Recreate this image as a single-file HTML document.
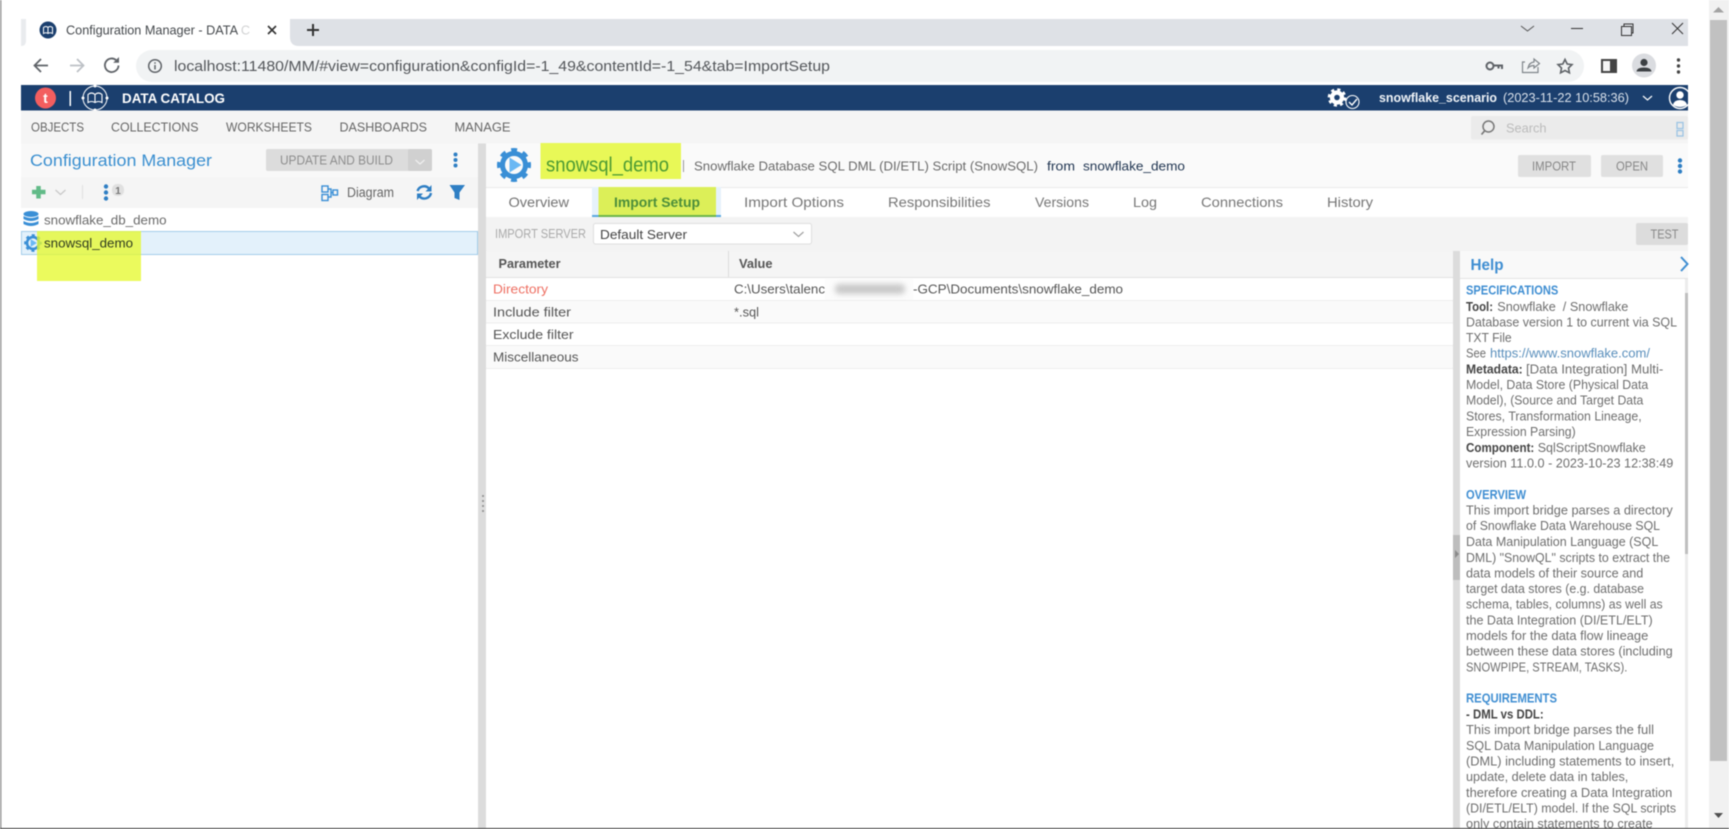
<!DOCTYPE html>
<html><head><meta charset="utf-8"><title>Configuration Manager - DATA CATALOG</title>
<style>
html,body{margin:0;padding:0;width:1729px;height:829px;overflow:hidden;background:#fff}
svg{display:block}
#root{filter:blur(.5px)}
text{font-family:"Liberation Sans",sans-serif;white-space:pre}
.h text{font-size:12.6px;fill:#6e6e6e}
.h .b{font-weight:bold;fill:#454545}
.h .c{font-weight:bold;fill:#3f8ed2}
.n{font-size:12.5px;fill:#666}
.m{font-size:13px;fill:#6a6a6a}
.r{font-size:13px;fill:#555}
.g{font-size:12.5px;fill:#9a9a9a}
</style></head><body>
<svg id="root" width="1729" height="829" viewBox="0 0 1729 829" xmlns="http://www.w3.org/2000/svg">
<defs>
<g id="gear"><circle r="11.5" fill="none" stroke="#3a8fd6" stroke-width="5"/><circle r="14.6" fill="none" stroke="#3a8fd6" stroke-width="4.8" stroke-dasharray="5.7 5.77" stroke-dashoffset="2.85"/><path d="M-4.5-7.5 7.5 0-4.5 7.5Z" fill="#6ab8f4"/></g>
<filter id="bl" x="-30%" y="-100%" width="160%" height="300%"><feGaussianBlur stdDeviation="3"/></filter>
</defs>
<rect width="1729" height="829" fill="#fff"/>
<rect x="0" y="0" width="1.5" height="829" fill="#9a9a9a"/>
<rect x="1709" y="0" width="20" height="829" fill="#f1f1f1"/>
<rect x="1710" y="20" width="17" height="741" fill="#c1c1c1"/>
<path d="M1713 12.5 1718.500 7 1724 12.500Z" fill="#a3a3a3"/>
<path d="M1714 813 1718.500 818 1723 813Z" fill="#505050"/>
<rect x="0" y="828" width="1729" height="1" fill="#333"/>

<!-- chrome tab strip -->
<rect x="21" y="19" width="1667" height="27" fill="#dee1e6"/>
<rect x="21" y="19" width="5" height="27" fill="#e9ebee"/>
<path d="M26 19H290V46H21Q26 46 26 41Z" fill="#fff"/>
<path d="M290 37Q290 46 299 46H290Z" fill="#fff"/>
<circle cx="48" cy="30" r="8.5" fill="#1b3f6e"/>
<path d="M43.500 33.500V27.500Q46 25.500 48 27.500Q50 25.500 52.500 27.500V33.500Q50 32 48 33.500Q46 32 43.500 33.500ZM48 27.500V33.500" fill="none" stroke="#fff" stroke-width="1"/>
<text x="66" y="34.500" font-size="13" fill="#45494d" textLength="184" lengthAdjust="spacingAndGlyphs">Configuration Manager - DATA C</text>
<rect x="240" y="22" width="17" height="18" fill="#fff" opacity=".75"/>
<path d="M268 26 276 34M276 26 268 34" stroke="#333" stroke-width="1.600"/>
<path d="M313 24V36M307 30H319" stroke="#333" stroke-width="2"/>
<path d="M1521 26 1527.500 31 1534 26" fill="none" stroke="#555" stroke-width="1"/>
<rect x="1571" y="28" width="12" height="1" fill="#333"/>
<rect x="1621.500" y="26.500" width="10" height="9" fill="#dee1e6" stroke="#333" stroke-width="1"/>
<path d="M1624 26V24H1633V33H1632" fill="none" stroke="#333" stroke-width="1"/>
<path d="M1672 23 1683 34M1683 23 1672 34" stroke="#333" stroke-width="1"/>

<!-- chrome toolbar -->
<path d="M48 65.500H35M41 59 34.500 65.500 41 72" fill="none" stroke="#5f6368" stroke-width="1.800"/>
<path d="M70 65.500H83M77 59 83.500 65.500 77 72" fill="none" stroke="#bdc1c6" stroke-width="1.800"/>
<path d="M118.500 65.500A6.800 6.800 0 1 1 116 60" fill="none" stroke="#5f6368" stroke-width="1.800"/>
<path d="M119 57V62.800H113.200Z" fill="#5f6368"/>
<rect x="136" y="50" width="1448" height="32" rx="16" fill="#f1f3f4"/>
<circle cx="155" cy="66" r="6.300" fill="none" stroke="#5f6368" stroke-width="1.500"/><path d="M155 65V69.500M155 62.200V63.700" stroke="#5f6368" stroke-width="1.500"/>
<text x="174" y="71" font-size="14.500" fill="#54575b" textLength="656" lengthAdjust="spacingAndGlyphs">localhost:11480/MM/#view=configuration&amp;configId=-1_49&amp;contentId=-1_54&amp;tab=ImportSetup</text>
<circle cx="1490" cy="66" r="3.500" fill="none" stroke="#5f6368" stroke-width="2"/><path d="M1493 65.500H1502V69M1498.500 66V68.500" fill="none" stroke="#5f6368" stroke-width="2"/>
<path d="M1525 62H1522.500V72.500H1538V67M1528 68Q1529 62.500 1534 62V59L1539.500 63.500 1534 68V65.500Q1530.500 65.500 1528 68Z" fill="none" stroke="#80868b" stroke-width="1.200"/>
<path d="M1565 59.500 1567.200 64 1572 64.600 1568.500 68 1569.400 72.800 1565 70.500 1560.600 72.800 1561.500 68 1558 64.600 1562.800 64Z" fill="none" stroke="#5f6368" stroke-width="1.600"/>
<rect x="1602" y="60" width="14" height="12" fill="#f5f5f5" stroke="#444" stroke-width="2"/><rect x="1610" y="60" width="6" height="12" fill="#444"/>
<circle cx="1644" cy="65.500" r="12" fill="#dadce0"/><circle cx="1644" cy="62.500" r="3.600" fill="#3c4043"/><path d="M1636.500 71.500Q1637 67.500 1644 67.500 1651 67.500 1651.500 71.500Z" fill="#3c4043"/>
<circle cx="1678.500" cy="60" r="1.700" fill="#444"/><circle cx="1678.500" cy="66" r="1.700" fill="#444"/><circle cx="1678.500" cy="72" r="1.700" fill="#444"/>

<!-- app header -->
<rect x="21" y="85" width="1667" height="25.500" fill="#1b3f6e"/>
<circle cx="45.500" cy="98" r="10.500" fill="#f35e5f"/>
<text x="45.500" y="103" font-size="14" font-weight="bold" fill="#fff" text-anchor="middle" font-family="Liberation Serif">t</text>
<rect x="69.500" y="91" width="1.500" height="15" fill="#fff"/>
<circle cx="95" cy="98" r="12" fill="none" stroke="#fff" stroke-width="1"/>
<circle cx="95" cy="86" r="1.500" fill="#fff"/><circle cx="95" cy="110" r="1.500" fill="#fff"/><circle cx="83" cy="98" r="1.500" fill="#fff"/><circle cx="107" cy="98" r="1.500" fill="#fff"/>
<path d="M88 102.500V94.500Q91.500 91.500 95 94.500Q98.500 91.500 102 94.500V102.500Q98.500 100.500 95 102.500Q91.500 100.500 88 102.500ZM95 94.500V102.500" fill="none" stroke="#fff" stroke-width="1.100"/>
<text x="122" y="103" font-size="14" font-weight="bold" fill="#fff" textLength="103" lengthAdjust="spacingAndGlyphs">DATA CATALOG</text>
<g transform="translate(1337,97.500) scale(.62)"><circle r="8" fill="none" stroke="#fff" stroke-width="7"/><circle r="12.500" fill="none" stroke="#fff" stroke-width="5" stroke-dasharray="4.900 4.920"/></g>
<circle cx="1352.500" cy="102" r="6.500" fill="#1b3f6e" stroke="#fff" stroke-width="1.100"/>
<path d="M1349 102 1352 105 1357 99" fill="none" stroke="#fff" stroke-width="1.400"/>
<text x="1379" y="102" font-size="12.500" font-weight="bold" fill="#f0f4f8" textLength="118" lengthAdjust="spacingAndGlyphs">snowflake_scenario</text>
<text x="1503" y="102" font-size="12.500" fill="#d8e0ea" textLength="126" lengthAdjust="spacingAndGlyphs">(2023-11-22 10:58:36)</text>
<path d="M1643 96 1647.500 100 1652 96" fill="none" stroke="#fff" stroke-width="1.200"/>
<circle cx="1680" cy="98" r="10.500" fill="#1b3f6e" stroke="#fff" stroke-width="1.400"/>
<circle cx="1680" cy="95" r="3.700" fill="#fff"/><path d="M1673 105Q1674 100 1680 100 1686 100 1687 105Q1680 109 1673 105Z" fill="#fff"/>
<rect x="1688" y="85" width="21" height="26" fill="#fff"/>

<!-- nav -->
<rect x="21" y="110.500" width="1667" height="33" fill="#f5f5f5"/>
<text class="n" x="31" y="131.500" textLength="53" lengthAdjust="spacingAndGlyphs">OBJECTS</text>
<text class="n" x="111" y="131.500" textLength="87.500" lengthAdjust="spacingAndGlyphs">COLLECTIONS</text>
<text class="n" x="226" y="131.500" textLength="86" lengthAdjust="spacingAndGlyphs">WORKSHEETS</text>
<text class="n" x="339.500" y="131.500" textLength="87.500" lengthAdjust="spacingAndGlyphs">DASHBOARDS</text>
<text class="n" x="454.500" y="131.500" textLength="56" lengthAdjust="spacingAndGlyphs">MANAGE</text>
<rect x="1471" y="116" width="217" height="23.500" rx="2" fill="#ebebeb"/>
<circle cx="1488.500" cy="126.500" r="5.500" fill="none" stroke="#777" stroke-width="1.500"/><path d="M1484.500 131 1481.500 134.500" stroke="#777" stroke-width="1.700"/>
<text x="1506" y="132.500" font-size="13" fill="#bbb" textLength="40.500" lengthAdjust="spacingAndGlyphs">Search</text>
<rect x="1677" y="122.500" width="6" height="6" fill="none" stroke="#9cc4e4" stroke-width="1.300"/><rect x="1677" y="130.500" width="6" height="5.500" fill="none" stroke="#9cc4e4" stroke-width="1.300"/>

<!-- left panel -->
<rect x="21" y="143.500" width="457" height="34" fill="#f8f8f8"/>
<rect x="21" y="177" width="457" height="31" fill="#f5f5f5"/>
<rect x="478" y="143.500" width="8" height="684.500" fill="#dcdcdc"/>
<circle cx="483" cy="496" r="1" fill="#888"/><circle cx="483" cy="501" r="1" fill="#888"/><circle cx="483" cy="506" r="1" fill="#888"/><circle cx="483" cy="511" r="1" fill="#888"/>
<text x="30" y="166" font-size="17" fill="#3a8fd0" textLength="182" lengthAdjust="spacingAndGlyphs">Configuration Manager</text>
<rect x="266" y="149" width="166" height="22" rx="2" fill="#dcdcdc"/>
<rect x="408" y="149" width="24" height="22" rx="2" fill="#d0d0d0"/>
<text x="280" y="164.500" font-size="12.500" fill="#8d8d8d" textLength="113" lengthAdjust="spacingAndGlyphs">UPDATE AND BUILD</text>
<path d="M415.500 160 420 164 424.500 160" fill="none" stroke="#efefef" stroke-width="1.300"/>
<circle cx="455.500" cy="154.500" r="2" fill="#2f7fc4"/><circle cx="455.500" cy="160" r="2" fill="#2f7fc4"/><circle cx="455.500" cy="165.500" r="2" fill="#2f7fc4"/>
<path d="M38.500 186V198.500M32 192H45.500" stroke="#62bb88" stroke-width="4.500"/>
<path d="M55.500 190 60.500 194.500 65.500 190" fill="none" stroke="#c9c9c9" stroke-width="1.300"/>
<rect x="82" y="185" width="1" height="14" fill="#e0e0e0"/>
<circle cx="106" cy="186.500" r="2.200" fill="#2f7fc4"/><circle cx="106" cy="192.500" r="2.200" fill="#2f7fc4"/><circle cx="106" cy="198.500" r="2.200" fill="#2f7fc4"/>
<rect x="112" y="184" width="12" height="12" rx="5" fill="#e0e0e0"/>
<text x="118" y="194" font-size="10" font-weight="bold" fill="#777" text-anchor="middle">1</text>
<g fill="none" stroke="#3a8fd6" stroke-width="1.400"><rect x="322" y="186" width="6" height="6"/><rect x="322" y="194.500" width="6" height="6"/><rect x="333" y="190" width="4.500" height="5"/><path d="M328 189H331V197H328M331 192.500H333"/></g>
<text x="347" y="197" font-size="13.500" fill="#666" textLength="47" lengthAdjust="spacingAndGlyphs">Diagram</text>
<path d="M417.500 191A6.800 6.800 0 0 1 429 188.500M431 193A6.800 6.800 0 0 1 419.500 196.500" fill="none" stroke="#2f7fc4" stroke-width="2.400"/>
<path d="M431.500 185V191.500H425.500ZM417 200V193.500H423Z" fill="#2f7fc4"/>
<path d="M449.500 185H465L459.500 192.500V200L454.500 198V192.500Z" fill="#2f7fc4"/>
<rect x="21" y="208" width="457" height="620" fill="#fff"/>
<g fill="#3a8fd6"><ellipse cx="31" cy="214" rx="7.500" ry="3"/><path d="M23.500 216V219Q31 223 38.500 219V216Q31 220 23.500 216Z"/><path d="M23.500 221V224Q31 228 38.500 224V221Q31 225 23.500 221Z"/></g>
<text class="m" x="44" y="224.500" textLength="122.500" lengthAdjust="spacingAndGlyphs">snowflake_db_demo</text>
<rect x="21.500" y="231.500" width="456" height="23" fill="#e3f1fb" stroke="#a3cdea" stroke-width="1"/>
<use href="#gear" transform="translate(33,243) scale(.52)"/>
<rect x="37" y="231" width="104" height="50" fill="#e6f92f" opacity=".78"/>
<text x="44" y="247.500" font-size="13" fill="#2f3b1e" textLength="89" lengthAdjust="spacingAndGlyphs">snowsql_demo</text>

<!-- object header -->
<rect x="486" y="143.500" width="1202" height="44" fill="#fafafa"/>
<use href="#gear" transform="translate(514,165)"/>
<rect x="540.500" y="143" width="140.500" height="36" fill="#e8f857"/>
<text x="546" y="171.500" font-size="20" fill="#4c9a33" textLength="123" lengthAdjust="spacingAndGlyphs">snowsql_demo</text>
<rect x="683" y="160" width="1" height="12" fill="#999"/>
<text class="m" x="694" y="170.500" textLength="344" lengthAdjust="spacingAndGlyphs">Snowflake Database SQL DML (DI/ETL) Script (SnowSQL)</text>
<text x="1047" y="170.500" font-size="13" fill="#1f3450" textLength="28" lengthAdjust="spacingAndGlyphs">from</text>
<text x="1083" y="170.500" font-size="13" fill="#1f3450" textLength="102" lengthAdjust="spacingAndGlyphs">snowflake_demo</text>
<rect x="1518" y="155" width="73" height="22" rx="2" fill="#e0e0e0"/>
<text x="1532" y="170.500" font-size="13" fill="#878787" textLength="44" lengthAdjust="spacingAndGlyphs">IMPORT</text>
<rect x="1601" y="155" width="62" height="22" rx="2" fill="#e0e0e0"/>
<text x="1616" y="170.500" font-size="13" fill="#878787" textLength="32" lengthAdjust="spacingAndGlyphs">OPEN</text>
<circle cx="1680" cy="160.500" r="2.200" fill="#2f7fc4"/><circle cx="1680" cy="166" r="2.200" fill="#2f7fc4"/><circle cx="1680" cy="171.500" r="2.200" fill="#2f7fc4"/>
<rect x="486" y="187" width="1202" height="1" fill="#eaeaea"/>

<!-- tabs -->
<rect x="486" y="188" width="1202" height="29" fill="#fff"/>
<text x="508.500" y="207" font-size="14" fill="#737373" textLength="60.500" lengthAdjust="spacingAndGlyphs">Overview</text>
<rect x="592" y="187" width="129" height="30" fill="#e6f2fb"/>
<rect x="592" y="215" width="129" height="2" fill="#5aa9e0"/>
<rect x="598.500" y="187" width="117.500" height="28" fill="#dcef58"/>
<rect x="598.500" y="215" width="117.500" height="2" fill="#6cb54a"/>
<text x="614" y="207" font-size="14" font-weight="bold" fill="#4c8e3a" textLength="86" lengthAdjust="spacingAndGlyphs">Import Setup</text>
<text x="744" y="207" font-size="14" fill="#777" textLength="100" lengthAdjust="spacingAndGlyphs">Import Options</text>
<text x="888" y="207" font-size="14" fill="#777" textLength="102.500" lengthAdjust="spacingAndGlyphs">Responsibilities</text>
<text x="1035" y="207" font-size="14" fill="#777" textLength="54" lengthAdjust="spacingAndGlyphs">Versions</text>
<text x="1133" y="207" font-size="14" fill="#777" textLength="24" lengthAdjust="spacingAndGlyphs">Log</text>
<text x="1201" y="207" font-size="14" fill="#777" textLength="82" lengthAdjust="spacingAndGlyphs">Connections</text>
<text x="1327" y="207" font-size="14" fill="#777" textLength="46" lengthAdjust="spacingAndGlyphs">History</text>

<!-- server row -->
<rect x="486" y="217" width="1202" height="34" fill="#f3f3f3"/>
<text x="495" y="238" font-size="12.500" fill="#aaa" textLength="91" lengthAdjust="spacingAndGlyphs">IMPORT SERVER</text>
<rect x="593.500" y="223.500" width="218" height="20.500" rx="2" fill="#fff" stroke="#dedede"/>
<text x="600" y="239" font-size="13" fill="#444" textLength="87" lengthAdjust="spacingAndGlyphs">Default Server</text>
<path d="M793.500 232 798.500 236.500 803.500 232" fill="none" stroke="#a0a0a0" stroke-width="1.200"/>
<rect x="1636" y="223" width="52" height="22" rx="2" fill="#dcdcdc"/>
<text x="1650.500" y="238.500" font-size="13" fill="#888" textLength="28" lengthAdjust="spacingAndGlyphs">TEST</text>

<!-- table -->
<rect x="486" y="251" width="967" height="577" fill="#fff"/>
<rect x="486" y="251" width="967" height="26" fill="#f5f5f5"/>
<rect x="486" y="277" width="967" height="1" fill="#e2e2e2"/>
<rect x="728" y="251" width="1" height="26" fill="#dcdcdc"/>
<text x="498.500" y="268" font-size="12.500" font-weight="bold" fill="#555" textLength="62" lengthAdjust="spacingAndGlyphs">Parameter</text>
<text x="739" y="268" font-size="12.500" font-weight="bold" fill="#555" textLength="33.500" lengthAdjust="spacingAndGlyphs">Value</text>
<rect x="486" y="300" width="967" height="22.500" fill="#fafafa"/>
<rect x="486" y="345" width="967" height="23" fill="#fafafa"/>
<g fill="#eeeeee"><rect x="486" y="300" width="967" height="1"/><rect x="486" y="322.500" width="967" height="1"/><rect x="486" y="345" width="967" height="1"/><rect x="486" y="368" width="967" height="1"/></g>
<text x="493" y="293.500" font-size="13" fill="#ee6f62" textLength="55" lengthAdjust="spacingAndGlyphs">Directory</text>
<text class="r" x="493" y="316.500" textLength="78" lengthAdjust="spacingAndGlyphs">Include filter</text>
<text class="r" x="493" y="339" textLength="80.500" lengthAdjust="spacingAndGlyphs">Exclude filter</text>
<text class="r" x="493" y="361.500" textLength="85.500" lengthAdjust="spacingAndGlyphs">Miscellaneous</text>
<text class="r" x="734" y="293.500" textLength="91" lengthAdjust="spacingAndGlyphs">C:\Users\talenc</text>
<rect x="825" y="279" width="88" height="21" fill="#fcfcfc"/>
<rect x="835" y="284" width="70" height="10" rx="4" fill="#c9c9c9" filter="url(#bl)"/>
<text class="r" x="913" y="293.500" textLength="210" lengthAdjust="spacingAndGlyphs">-GCP\Documents\snowflake_demo</text>
<text class="r" x="734" y="316.500" textLength="25" lengthAdjust="spacingAndGlyphs">*.sql</text>

<!-- help -->
<rect x="1453" y="251" width="7" height="577" fill="#dcdcdc"/>
<rect x="1453" y="535" width="7" height="45" fill="#bdbdbd"/>
<path d="M1455 550V558L1459 554Z" fill="#8a8a8a"/>
<rect x="1460" y="251" width="228" height="28" fill="#f9f9f9"/>
<rect x="1460" y="278" width="228" height="1" fill="#e3e3e3"/>
<text x="1470.500" y="270" font-size="16" font-weight="bold" fill="#3f8ed2" textLength="33" lengthAdjust="spacingAndGlyphs">Help</text>
<path d="M1681 257 1687.500 264 1681 271" fill="none" stroke="#3f8ed2" stroke-width="2"/>
<rect x="1460" y="279" width="225" height="549" fill="#fff"/>
<rect x="1685" y="279" width="3" height="549" fill="#ececec"/>
<rect x="1685" y="293" width="3" height="261" fill="#bfbfbf"/>
<svg x="1460" y="279" width="225" height="549" viewBox="1460 279 225 549" class="h">
<text class="c" x="1466" y="294.500" textLength="92.300" lengthAdjust="spacingAndGlyphs">SPECIFICATIONS</text>
<text class="b" x="1466" y="311" textLength="27" lengthAdjust="spacingAndGlyphs">Tool:</text>
<text x="1497.300" y="311" textLength="131" lengthAdjust="spacingAndGlyphs">Snowflake  / Snowflake</text>
<text x="1466" y="326.500" textLength="211" lengthAdjust="spacingAndGlyphs">Database version 1 to current via SQL</text>
<text x="1466" y="342" textLength="45.700" lengthAdjust="spacingAndGlyphs">TXT File</text>
<text x="1466" y="357.500" textLength="20" lengthAdjust="spacingAndGlyphs">See</text>
<text x="1490" y="357.500" textLength="160" lengthAdjust="spacingAndGlyphs" style="fill:#5a8fbc">https://www.snowflake.com/</text>
<text class="b" x="1466" y="373.500" textLength="56.700" lengthAdjust="spacingAndGlyphs">Metadata:</text>
<text x="1526" y="373.500" textLength="137.300" lengthAdjust="spacingAndGlyphs">[Data Integration] Multi-</text>
<text x="1466" y="389" textLength="182.300" lengthAdjust="spacingAndGlyphs">Model, Data Store (Physical Data</text>
<text x="1466" y="404.500" textLength="177.300" lengthAdjust="spacingAndGlyphs">Model), (Source and Target Data</text>
<text x="1466" y="420.500" textLength="175.700" lengthAdjust="spacingAndGlyphs">Stores, Transformation Lineage,</text>
<text x="1466" y="436" textLength="109.700" lengthAdjust="spacingAndGlyphs">Expression Parsing)</text>
<text class="b" x="1466" y="452" textLength="68.300" lengthAdjust="spacingAndGlyphs">Component:</text>
<text x="1537.700" y="452" textLength="108" lengthAdjust="spacingAndGlyphs">SqlScriptSnowflake</text>
<text x="1466" y="467.500" textLength="207.300" lengthAdjust="spacingAndGlyphs">version 11.0.0 - 2023-10-23 12:38:49</text>
<text class="c" x="1466" y="499" textLength="60" lengthAdjust="spacingAndGlyphs">OVERVIEW</text>
<text x="1466" y="514.500" textLength="206.700" lengthAdjust="spacingAndGlyphs">This import bridge parses a directory</text>
<text x="1466" y="530" textLength="194" lengthAdjust="spacingAndGlyphs">of Snowflake Data Warehouse SQL</text>
<text x="1466" y="546" textLength="192.300" lengthAdjust="spacingAndGlyphs">Data Manipulation Language (SQL</text>
<text x="1466" y="562" textLength="204" lengthAdjust="spacingAndGlyphs">DML) "SnowQL" scripts to extract the</text>
<text x="1466" y="577.500" textLength="177.300" lengthAdjust="spacingAndGlyphs">data models of their source and</text>
<text x="1466" y="593" textLength="178" lengthAdjust="spacingAndGlyphs">target data stores (e.g. database</text>
<text x="1466" y="608.500" textLength="196.700" lengthAdjust="spacingAndGlyphs">schema, tables, columns) as well as</text>
<text x="1466" y="624.500" textLength="186.700" lengthAdjust="spacingAndGlyphs">the Data Integration (DI/ETL/ELT)</text>
<text x="1466" y="640" textLength="182.300" lengthAdjust="spacingAndGlyphs">models for the data flow lineage</text>
<text x="1466" y="655.500" textLength="206.700" lengthAdjust="spacingAndGlyphs">between these data stores (including</text>
<text x="1466" y="671.500" textLength="161.300" lengthAdjust="spacingAndGlyphs">SNOWPIPE, STREAM, TASKS).</text>
<text class="c" x="1466" y="702.500" textLength="91" lengthAdjust="spacingAndGlyphs">REQUIREMENTS</text>
<text class="b" x="1466" y="718.500" textLength="77.700" lengthAdjust="spacingAndGlyphs">- DML vs DDL:</text>
<text x="1466" y="734" textLength="188" lengthAdjust="spacingAndGlyphs">This import bridge parses the full</text>
<text x="1466" y="750" textLength="188" lengthAdjust="spacingAndGlyphs">SQL Data Manipulation Language</text>
<text x="1466" y="765.500" textLength="208.300" lengthAdjust="spacingAndGlyphs">(DML) including statements to insert,</text>
<text x="1466" y="781" textLength="162.300" lengthAdjust="spacingAndGlyphs">update, delete data in tables,</text>
<text x="1466" y="797" textLength="206.300" lengthAdjust="spacingAndGlyphs">therefore creating a Data Integration</text>
<text x="1466" y="812.500" textLength="210" lengthAdjust="spacingAndGlyphs">(DI/ETL/ELT) model. If the SQL scripts</text>
<text x="1466" y="828" textLength="186.700" lengthAdjust="spacingAndGlyphs">only contain statements to create</text>
</svg>
</svg>
</body></html>
